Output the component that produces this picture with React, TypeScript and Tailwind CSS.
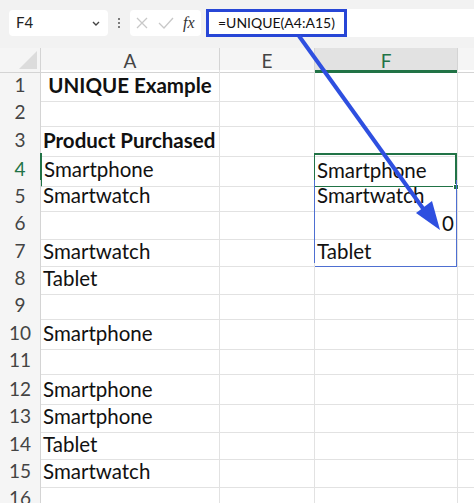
import React from "react";

const rows: { a?: string; bold?: boolean; center?: boolean; f?: string; fRight?: boolean }[] = [
  { a: "UNIQUE Example", bold: true, center: true },
  {},
  { a: "Product Purchased", bold: true },
  { a: "Smartphone", f: "Smartphone" },
  { a: "Smartwatch", f: "Smartwatch" },
  { f: "0", fRight: true },
  { a: "Smartwatch", f: "Tablet" },
  { a: "Tablet" },
  {},
  { a: "Smartphone" },
  {},
  { a: "Smartphone" },
  { a: "Smartphone" },
  { a: "Tablet" },
  { a: "Smartwatch" },
  {},
];

const cols = "grid grid-cols-[40px_179px_95px_143px_1fr]";

export default function App() {
  return (
    <div className="relative h-[503px] w-[474px] overflow-hidden bg-white font-['Lato','Noto_Sans',sans-serif] text-[#111]">
      {/* toolbar */}
      <div className="flex h-[44px] items-center bg-[#f2f2f2] pl-[9px] pt-[1px]">
        <div className="flex h-[26px] w-[99px] items-center justify-between rounded-[4px] bg-white pl-[7px] pr-[6px] text-[15px] text-[#222]">
          <span>F4</span>
          <svg width="12" height="12" viewBox="0 0 12 12" className="text-[#444]">
            <path d="M3 5l3 3 3-3" fill="none" stroke="currentColor" strokeWidth="1.4" />
          </svg>
        </div>
        <div className="flex w-[22px] flex-col items-center gap-[2px]">
          <span className="h-[2px] w-[2px] rounded-full bg-[#555]" />
          <span className="h-[2px] w-[2px] rounded-full bg-[#555]" />
          <span className="h-[2px] w-[2px] rounded-full bg-[#555]" />
        </div>
        <div className="flex h-[26px] w-[71px] items-center gap-[9px] rounded-[4px] bg-white pl-[5px]">
          <svg width="14" height="14" viewBox="0 0 14 14">
            <path d="M2 2l10 10M12 2L2 12" stroke="#c8c8c8" strokeWidth="1.3" />
          </svg>
          <svg width="16" height="14" viewBox="0 0 16 14">
            <path d="M1 7l5 5 9-10" fill="none" stroke="#c8c8c8" strokeWidth="1.3" />
          </svg>
          <span className="font-['Liberation_Serif',serif] text-[16px] italic text-[#333]">fx</span>
        </div>
        <div className="ml-[5px] flex h-[28px] flex-1 items-center bg-white">
          <div className="flex h-[28px] w-[141px] items-center whitespace-nowrap border-[3px] border-[#2746d6] pl-[9px] text-[14px] text-[#111]">
            =UNIQUE(A4:A15)
          </div>
        </div>
      </div>
      <div className="h-[4px] bg-[#f2f2f2]" />

      {/* column headers */}
      <div className={`${cols} h-[22px] bg-[#f5f5f5] text-[19px] text-[#444]`}>
        <div className="relative border-b border-[#d4d4d4]">
          <svg width="20" height="18" viewBox="0 0 20 18" className="absolute bottom-[3px] right-[3px]">
            <path d="M20 0V18H2z" fill="#dcdcdc" />
          </svg>
        </div>
        <div className="flex items-center justify-center border-b border-l border-[#d4d4d4] leading-none">A</div>
        <div className="flex items-center justify-center border-b border-l border-[#d4d4d4] leading-none">E</div>
        <div className="flex items-center justify-center border-b-[3px] border-l border-b-[#217346] border-l-[#d4d4d4] bg-[#e2e2e2] pt-[3px] leading-none text-[#217346]">
          F
        </div>
        <div className="border-b border-l border-[#d4d4d4]" />
      </div>

      {/* rows */}
      {rows.map((r, i) => {
        const n = i + 1;
        const sel = n === 4;
        const spill = n >= 4 && n <= 7;
        return (
          <div key={n} className={`${cols} h-[27.6px] text-[20.5px]`}>
            <div
              className={`flex items-center justify-center border-b border-[#d8d8d8] bg-[#f5f5f5] text-[19px] ${
                sel ? "bg-[#e2e2e2] text-[#217346]" : "text-[#444]"
              }`}
            >
              {n}
            </div>
            <div
              className={`flex items-center overflow-visible whitespace-nowrap border-b border-l border-b-[#e2e2e2] px-[2px] ${
                sel ? "border-l-2 border-l-[#217346]" : "border-l-[#d4d4d4]"
              } ${r.center ? "justify-center" : ""} ${r.bold ? "font-bold" : ""}`}
            >
              {r.a}
            </div>
            <div className="border-b border-l border-[#e2e2e2]" />
            <div
              className={`relative flex items-center whitespace-nowrap border-b border-l px-[2px] ${
                sel
                  ? "border-2 border-[#217346]"
                  : spill
                  ? "border-l-[#4e6fd1] border-r border-r-[#4e6fd1] " + (n === 7 ? "border-b-[#4e6fd1]" : "border-b-[#e2e2e2]")
                  : "border-[#e2e2e2]"
              } ${r.fRight ? "justify-end" : ""}`}
            >
              {r.f}
              {sel && <span className="absolute -bottom-[4px] -right-[4px] h-[6px] w-[6px] border border-white bg-[#217346]" />}
            </div>
            <div className="border-b border-l border-[#e2e2e2]" />
          </div>
        );
      })}

      {/* arrow */}
      <svg className="pointer-events-none absolute left-0 top-0" width="474" height="503" viewBox="0 0 474 503">
        <line x1="299" y1="36" x2="427" y2="214" stroke="#2e4fe0" strokeWidth="4" />
        <path d="M440 230L416 213L432 201z" fill="#2e4fe0" />
      </svg>
    </div>
  );
}
